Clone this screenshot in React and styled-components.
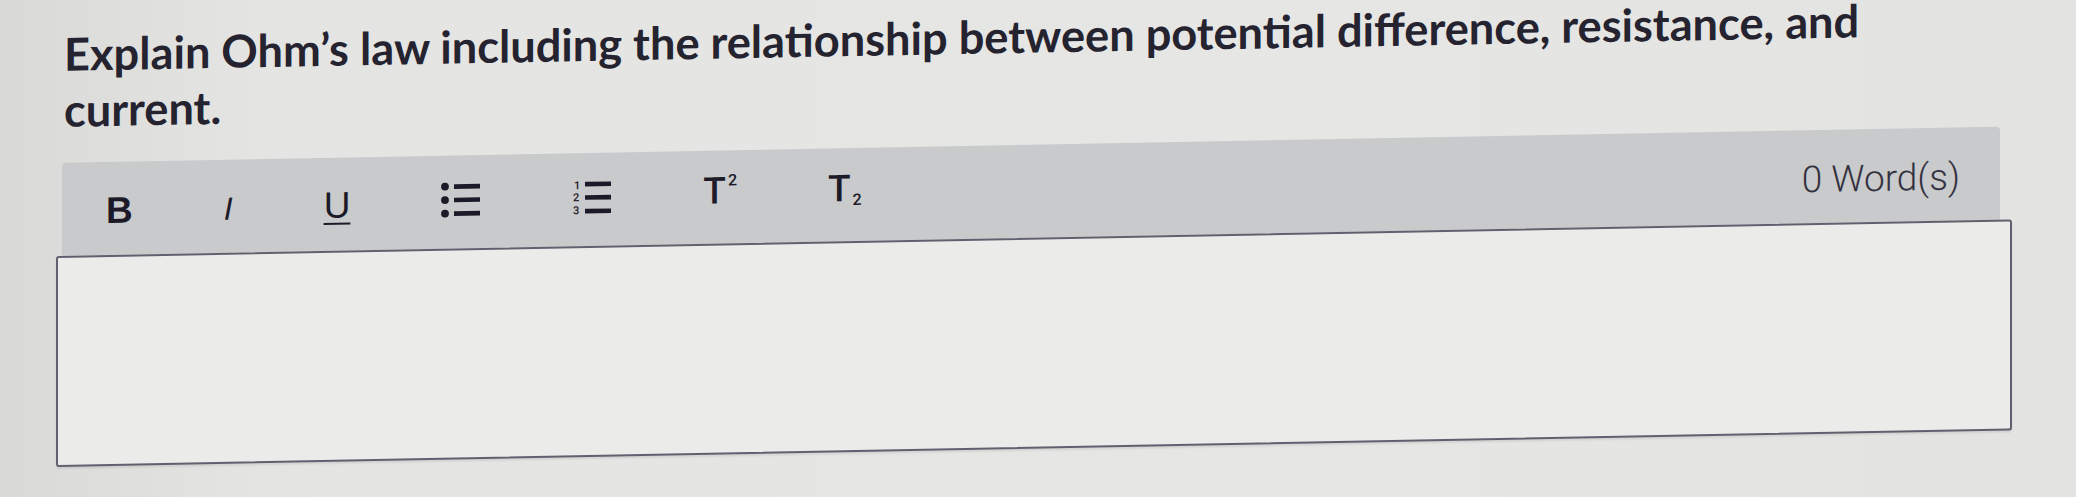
import React from 'react';
import styled, { createGlobalStyle } from 'styled-components';

// 페이지 기본 스타일
const GlobalStyle = createGlobalStyle`
    html, body {
        margin: 0;
        padding: 0;
        height: 100%;
        background: linear-gradient(90deg, #d9d9d7 0%, #e4e4e2 12%, #e6e6e4 60%, #e3e3e1 100%);
        overflow: hidden;
    }
`;

// 사진처럼 살짝 기울어진 화면
const Page = styled.div`
    transform: skewY(-1.07deg);
    transform-origin: 0 0;
    padding-top: 27px;
`;

const Question = styled.h1`
    margin: 0 0 0 64px;
    max-width: 1880px;
    font-family: Lato, "Open Sans", sans-serif;
    font-weight: 700;
    font-size: 45.2px;
    line-height: 56px;
    color: #24232f;
`;

const Editor = styled.section`
    margin: 25px 0 0 56px;
    width: 1956px;
`;

const Toolbar = styled.div`
    display: flex;
    align-items: center;
    gap: 91px;
    height: 93px;
    margin: 0 12px 0 6px;
    padding: 0 40px 0 44px;
    background: #c9cacb;
    border-radius: 4px 4px 0 0;
    color: #1c1a28;
`;

// 툴바 버튼
const Tool = styled.span`
    display: inline-flex;
    align-items: flex-start;
    margin-bottom: ${(p) => p.$lift || 0}px;
    margin-top: ${(p) => p.$drop || 0}px;
    font-family: ${(p) => p.$font || '"Liberation Sans", Arial, sans-serif'};
    font-size: ${(p) => p.$size || 37}px;
    font-weight: ${(p) => p.$weight || 400};
    font-style: ${(p) => (p.$italic ? 'italic' : 'normal')};
    text-decoration: ${(p) => (p.$under ? 'underline' : 'none')};
    text-decoration-thickness: 2px;
    text-underline-offset: 5px;
    line-height: 1.1;

    svg {
        overflow: visible;
    }
`;

const Script = styled.span`
    font-family: Roboto, sans-serif;
    font-size: 16px;
    font-weight: 500;
    margin-left: 2px;
    margin-top: ${(p) => (p.$sub ? 22 : 0)}px;
`;

const WordCount = styled.span`
    margin-left: auto;
    font-family: Roboto, "Liberation Sans", sans-serif;
    font-weight: 300;
    font-size: 37px;
    color: #34323f;
    margin-top: 6px;
`;

const AnswerBox = styled.div`
    box-sizing: border-box;
    height: 211px;
    border: 2px solid #62606f;
    border-radius: 3px;
    background: #ebebea;
    box-shadow: 0 2px 2px rgba(0, 0, 0, 0.08);
`;

const BulletIcon = () => (
    <svg width="40" height="35" viewBox="0 0 40 35">
        <circle cx="4" cy="4" r="3.9" fill="currentColor" />
        <circle cx="4" cy="17.5" r="3.9" fill="currentColor" />
        <circle cx="4" cy="31" r="3.9" fill="currentColor" />
        <rect x="13" y="1.8" width="26" height="4.6" fill="currentColor" />
        <rect x="13" y="15.2" width="26" height="4.6" fill="currentColor" />
        <rect x="13" y="28.8" width="26" height="4.6" fill="currentColor" />
    </svg>
);

const NumberIcon = () => (
    <svg width="40" height="36" viewBox="0 0 40 36">
        <g fill="currentColor" fontFamily="Roboto, sans-serif" fontSize="11" fontWeight="500">
            <text x="2" y="9">1</text>
            <text x="1" y="21">2</text>
            <text x="1" y="34">3</text>
        </g>
        <rect x="13" y="1.8" width="26" height="4.6" fill="currentColor" />
        <rect x="13" y="15.2" width="26" height="4.6" fill="currentColor" />
        <rect x="13" y="28.8" width="26" height="4.6" fill="currentColor" />
    </svg>
);

const App = () => (
    <>
        <GlobalStyle />
        <Page>
            <Question>
                Explain Ohm’s law including the relationship between potential difference, resistance, and current.
            </Question>
            <Editor>
                <Toolbar>
                    <Tool $weight={700} $drop={6}>B</Tool>
                    <Tool $italic $size={32} $drop={6}>I</Tool>
                    <Tool $under $drop={4}>U</Tool>
                    <Tool $lift={4}><BulletIcon /></Tool>
                    <Tool $lift={4}><NumberIcon /></Tool>
                    <Tool $font="Roboto, sans-serif" $weight={500} $lift={10}>
                        T<Script>2</Script>
                    </Tool>
                    <Tool $font="Roboto, sans-serif" $weight={500} $lift={10}>
                        T<Script $sub>2</Script>
                    </Tool>
                    <WordCount>0 Word(s)</WordCount>
                </Toolbar>
                <AnswerBox />
            </Editor>
        </Page>
    </>
);

export default App;
